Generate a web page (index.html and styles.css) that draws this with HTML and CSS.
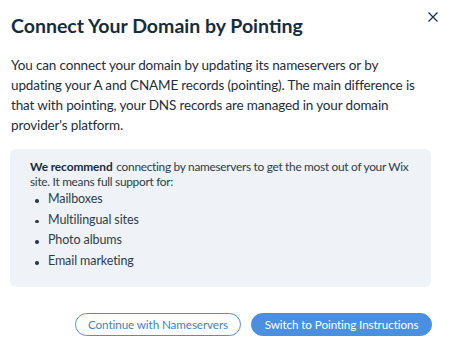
FILE: index.html
```html
<!DOCTYPE html>
<html>
<head>
<meta charset="utf-8">
<link rel="stylesheet" href="styles.css">
</head>
<body>
<div class="modal">
  <button class="close" aria-label="Close">
    <svg width="10" height="10" viewBox="0 0 10 10"><path d="M0.5 0.5L9.5 9.5M9.5 0.5L0.5 9.5" stroke="#162d3d" stroke-width="1.2"/></svg>
  </button>
  <h1 class="title">Connect Your Domain by Pointing</h1>
  <p class="desc">You can connect your domain by updating its nameservers or by updating your A and CNAME records (pointing). The main difference is that with pointing, your DNS records are managed in your domain provider's platform.</p>
  <div class="note">
    <p class="note-text"><b class="strong">We recommend</b> connecting by nameservers to get the most out of your Wix site. It means full support for:</p>
    <ul class="list">
      <li>Mailboxes</li>
      <li>Multilingual sites</li>
      <li>Photo albums</li>
      <li>Email marketing</li>
    </ul>
  </div>
  <div class="actions">
    <button class="btn btn-secondary">Continue with Nameservers</button>
    <button class="btn btn-primary">Switch to Pointing Instructions</button>
  </div>
</div>
</body>
</html>
```

FILE: styles.css
```css
* { box-sizing: border-box; }
html, body { margin: 0; padding: 0; background: #fff; }
body {
  font-family: Lato, "Open Sans", sans-serif;
  color: #162d3d;
  width: 454px;
  height: 354px;
  overflow: hidden;
}
.modal {
  position: relative;
  padding: 14px 23px 0 11px;
}
.close {
  position: absolute;
  top: 12px;
  right: 16px;
  border: 0;
  background: none;
  padding: 0;
  width: 10px;
  height: 10px;
  display: flex;
}
.title {
  margin: 0;
  font-size: 19.5px;
  font-weight: 700;
  line-height: 24px;
  color: #162d3d;
}
.desc {
  margin: 17px 0 0;
  font-size: 13.5px;
  letter-spacing: -0.15px;
  line-height: 20px;
  color: #1d2e3b;
}
.note {
  margin: 14px 0 0 -1px;
  background: #eff3f7;
  border-radius: 6px;
  padding: 10px 12px 15px 20px;
  width: 421px;
}
.note-text {
  margin: 0;
  font-size: 11.9px;
  letter-spacing: -0.3px;
  line-height: 15px;
  color: #2e3d4a;
}
.strong {
  color: #162d3d;
  letter-spacing: -0.1px;
  margin-right: 1px;
}
.list {
  margin: 0;
  padding: 0 0 0 18px;
  list-style: none;
  font-size: 12.5px;
  letter-spacing: -0.1px;
  color: #2e3d4a;
}
.list li {
  line-height: 20.7px;
  position: relative;
}
.list li::before {
  content: "";
  position: absolute;
  left: -13px;
  top: 10px;
  width: 3.5px;
  height: 3.5px;
  border-radius: 50%;
  background: #2e3d4a;
}
.actions {
  display: flex;
  justify-content: flex-end;
  gap: 10px;
  margin-top: 26px;
  width: 421px;
}
.btn {
  height: 23px;
  border-radius: 12px;
  font-family: inherit;
  font-size: 11.7px;
  letter-spacing: -0.1px;
  padding: 0;
  line-height: 21px;
  white-space: nowrap;
  cursor: pointer;
}
.btn-secondary {
  background: #fff;
  border: 1px solid #4a90e2;
  color: #3b82d6;
  width: 166px;
}
.btn-primary {
  background: #4a8fe0;
  border: 1px solid #4a8fe0;
  color: #fff;
  width: 181px;
}
```
